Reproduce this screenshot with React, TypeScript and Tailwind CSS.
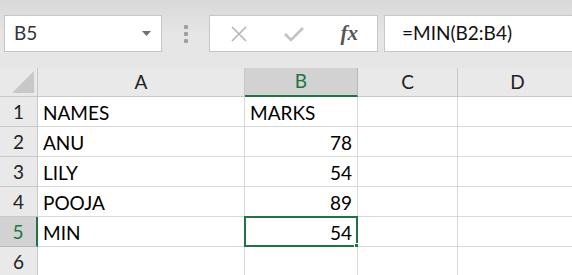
import React from "react";

const cols = [
  { id: "A", w: "w-[207px]" },
  { id: "B", w: "w-[113px]" },
  { id: "C", w: "w-[100px]" },
  { id: "D", w: "w-[120px]" },
];

const rows: { a: string; b: string }[] = [
  { a: "NAMES", b: "MARKS" },
  { a: "ANU", b: "78" },
  { a: "LILY", b: "54" },
  { a: "POOJA", b: "89" },
  { a: "MIN", b: "54" },
  { a: "", b: "" },
];

function isNum(s: string) {
  return /^\d+$/.test(s);
}

function FormulaBar() {
  return (
    <div className="h-[68px] flex items-start pt-[15px] pl-[4px] bg-gradient-to-b from-[#d8d8d8] via-[#e6e6e6] to-[#e6e6e6]">
      <div className="w-[158px] h-[37px] bg-white border border-[#c6c6c6] flex items-center justify-between pl-[9px] pr-[10px]">
        <span className="text-[19px] text-[#333]">B5</span>
        <svg width="9" height="5" viewBox="0 0 9 5">
          <path d="M0 0 L9 0 L4.5 5 Z" fill="#707070" />
        </svg>
      </div>
      <div className="w-[47px] h-[37px] flex flex-col items-center justify-center gap-[3px]">
        <span className="w-[4px] h-[4px] bg-[#a0a0a0] rounded-[1px]" />
        <span className="w-[4px] h-[4px] bg-[#a0a0a0] rounded-[1px]" />
        <span className="w-[4px] h-[4px] bg-[#a0a0a0] rounded-[1px]" />
      </div>
      <div className="w-[169px] h-[37px] bg-white border border-[#c6c6c6] flex items-center">
        <div className="w-[56px] flex justify-center pl-[2px]">
          <svg width="18" height="18" viewBox="0 0 18 18">
            <path d="M2 2 L16 16 M16 2 L2 16" stroke="#b4b4b4" strokeWidth="1.6" fill="none" />
          </svg>
        </div>
        <div className="w-[56px] flex justify-center">
          <svg width="22" height="18" viewBox="0 0 22 18">
            <path d="M2 9 L8 15 L20 3" stroke="#c2c2c2" strokeWidth="2.6" fill="none" />
          </svg>
        </div>
        <div className="w-[56px] flex justify-center">
          <span className="italic text-[21px] leading-none text-[#555] font-['Liberation_Serif',serif] font-bold">fx</span>
        </div>
      </div>
      <div className="flex-1 ml-[6px] h-[37px] bg-white border border-r-0 border-[#c6c6c6] flex items-center pl-[17px]">
        <span className="text-[19px] text-[#111]">=MIN(B2:B4)</span>
      </div>
    </div>
  );
}

function Grid() {
  return (
    <div className="flex flex-col">
      <div className="flex h-[29px]">
        <div className="w-[38px] shrink-0 bg-[#e9e9e9] border-r border-b border-[#c8c8c8] flex items-end justify-end p-[3px]">
          <svg width="22" height="22" viewBox="0 0 22 22">
            <path d="M22 0 L22 22 L0 22 Z" fill="#c8c8c8" />
          </svg>
        </div>
        {cols.map((c) => {
          const sel = c.id === "B";
          return (
            <div
              key={c.id}
              className={`${c.w} shrink-0 flex items-center justify-center border-r text-[19px] ${
                sel
                  ? "bg-[#d2d2d2] border-[#b8b8b8] border-b-2 border-b-[#217346] text-[#217346]"
                  : "bg-[#e9e9e9] border-[#c8c8c8] border-b text-[#222]"
              }`}
            >
              {c.id}
            </div>
          );
        })}
      </div>
      {rows.map((r, i) => {
        const n = i + 1;
        const sel = n === 5;
        return (
          <div key={n} className="flex h-[30px]">
            <div
              className={`w-[38px] shrink-0 flex items-center justify-center pt-[2px] border-b text-[19px] ${
                sel
                  ? "bg-[#d2d2d2] border-[#b8b8b8] border-r-2 border-r-[#217346] text-[#217346]"
                  : "bg-[#e9e9e9] border-[#c8c8c8] border-r text-[#222]"
              }`}
            >
              {n}
            </div>
            {cols.map((c) => {
              const v = c.id === "A" ? r.a : c.id === "B" ? r.b : "";
              const active = sel && c.id === "B";
              return (
                <div
                  key={c.id}
                  className={`${c.w} shrink-0 relative flex items-center pt-[4px] px-[5px] border-r border-b border-[#d9d9d9] bg-white text-[19px] text-black ${
                    isNum(v) ? "justify-end" : "justify-start"
                  }`}
                >
                  {v}
                  {active && (
                    <>
                      <div className="absolute -top-[1px] -left-[1px] -right-[1px] -bottom-[1px] border-2 border-[#217346] pointer-events-none" />
                      <div className="absolute -right-[4px] -bottom-[4px] w-[7px] h-[7px] bg-[#217346] border border-white" />
                    </>
                  )}
                </div>
              );
            })}
          </div>
        );
      })}
    </div>
  );
}

export default function App() {
  return (
    <div className="w-[572px] h-[275px] overflow-hidden bg-white font-['Lato','Open_Sans',sans-serif]">
      <FormulaBar />
      <Grid />
    </div>
  );
}
